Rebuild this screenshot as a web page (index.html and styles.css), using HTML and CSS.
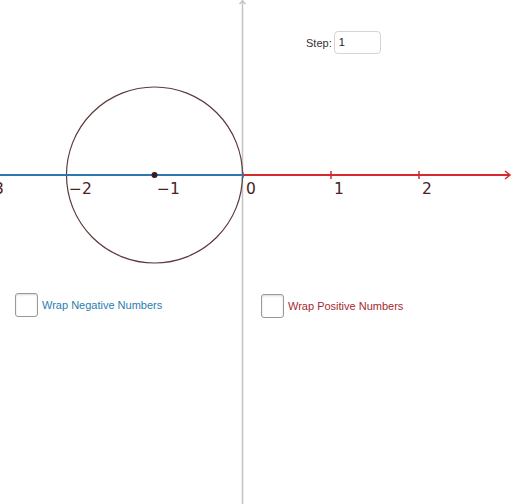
FILE: index.html
```html
<!DOCTYPE html>
<html lang="en">
<head>
    <meta charset="UTF-8">
    <title>Wrapping Numbers</title>
    <link rel="stylesheet" href="styles.css">
</head>
<body>
    <div class="applet">
        <svg class="graphics" width="512" height="504" viewBox="0 0 512 504">
            <!-- y axis -->
            <line x1="242.5" y1="0" x2="242.5" y2="504" class="y-axis"/>
            <polyline points="239.5,4 242.5,1 245.5,4" class="y-axis"/>

            <!-- circle and point -->
            <circle cx="154.5" cy="175" r="88" class="wheel"/>

            <!-- negative side -->
            <line x1="0" y1="175" x2="243" y2="175" class="neg"/>
            <line x1="243" y1="172" x2="243" y2="178" class="neg-tick"/>

            <!-- positive side -->
            <line x1="243" y1="175" x2="510" y2="175" class="pos"/>
            <line x1="331" y1="171" x2="331" y2="179" class="pos-tick"/>
            <line x1="419" y1="171" x2="419" y2="179" class="pos-tick"/>
            <polyline points="505,171 510,175 505,179" class="pos-tick"/>

            <circle cx="154.5" cy="175" r="3" class="dot"/>

            <text x="-19" y="194" class="tick-label">−3</text>
            <text x="69" y="194" class="tick-label">−2</text>
            <text x="157" y="194" class="tick-label">−1</text>
            <text x="246" y="194" class="tick-label">0</text>
            <text x="334" y="194" class="tick-label">1</text>
            <text x="422" y="194" class="tick-label">2</text>
        </svg>

        <label class="step">
            <span class="step-text">Step:</span>
            <span class="step-input">1</span>
        </label>

        <label class="wrap wrap-neg">
            <span class="box"></span>
            <span class="wrap-text">Wrap Negative Numbers</span>
        </label>

        <label class="wrap wrap-pos">
            <span class="box"></span>
            <span class="wrap-text">Wrap Positive Numbers</span>
        </label>
    </div>
</body>
</html>
```

FILE: styles.css
```css
body {
    margin: 0;
    padding: 0;
    background-color: #fff;
    font-family: "Liberation Sans", Arial, sans-serif;
}
.applet {
    position: relative;
    width: 512px;
    height: 504px;
    overflow: hidden;
}
.graphics {
    display: block;
}
.y-axis {
    stroke: #c4c4c4;
    stroke-width: 1.5;
    fill: none;
}
.wheel {
    fill: none;
    stroke: #5e3a3c;
    stroke-width: 1.2;
}
.dot {
    fill: #3a1c1e;
}
.neg {
    stroke: #2b79ad;
    stroke-width: 2;
}
.neg-tick {
    stroke: #2b79ad;
    stroke-width: 1.5;
}
.pos {
    stroke: #d42a2e;
    stroke-width: 2;
}
.pos-tick {
    stroke: #d42a2e;
    stroke-width: 1.5;
    fill: none;
}
.tick-label {
    font-family: "DejaVu Sans", sans-serif;
    font-size: 15.5px;
    fill: #4a2224;
}

/* controls on top of the graphics view */
.step {
    position: absolute;
    left: 306px;
    top: 31px;
    display: flex;
    align-items: center;
    gap: 2px;
    font-size: 11px;
    color: #333;
}
.step-input {
    width: 41px;
    height: 21px;
    line-height: 21px;
    padding-left: 4px;
    border: 1px solid #d4d4d4;
    border-radius: 4px;
    color: #222;
}
.wrap {
    position: absolute;
    display: flex;
    align-items: center;
    gap: 4px;
    font-size: 11px;
}
.wrap-neg {
    left: 15px;
    top: 293px;
    color: #2a7db0;
}
.wrap-pos {
    left: 261px;
    top: 294px;
    color: #a52a2f;
}
.box {
    width: 21px;
    height: 22px;
    border: 1.5px solid #999;
    border-radius: 3px;
    box-shadow: inset 0 1px 2px rgba(0, 0, 0, 0.15);
    background-color: #fff;
}
```
